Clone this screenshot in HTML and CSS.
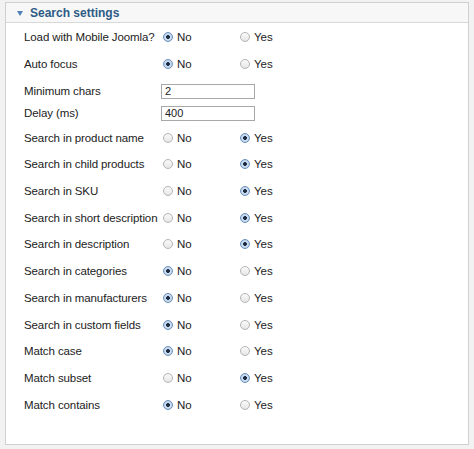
FILE: index.html
```html
<!DOCTYPE html>
<html lang="en">
<head>
  <meta charset="UTF-8">
  <title>Search settings</title>
  <link rel="stylesheet" href="styles.css">
</head>
<body>
  <div class="panel">
    <div class="panel-head">
      <span class="arrow"></span>
      <span class="panel-title">Search settings</span>
    </div>
    <div class="panel-body">
      <div class="row">
        <label class="name">Load with Mobile Joomla?</label>
        <label class="opt"><input type="radio" name="mj" checked> No</label>
        <label class="opt"><input type="radio" name="mj"> Yes</label>
      </div>
      <div class="row">
        <label class="name">Auto focus</label>
        <label class="opt"><input type="radio" name="af" checked> No</label>
        <label class="opt"><input type="radio" name="af"> Yes</label>
      </div>
      <div class="row row-text first-text">
        <label class="name">Minimum chars</label>
        <input type="text" class="field" value="2">
      </div>
      <div class="row row-text">
        <label class="name">Delay (ms)</label>
        <input type="text" class="field" value="400">
      </div>
      <div class="row">
        <label class="name">Search in product name</label>
        <label class="opt"><input type="radio" name="pn"> No</label>
        <label class="opt"><input type="radio" name="pn" checked> Yes</label>
      </div>
      <div class="row">
        <label class="name">Search in child products</label>
        <label class="opt"><input type="radio" name="cp"> No</label>
        <label class="opt"><input type="radio" name="cp" checked> Yes</label>
      </div>
      <div class="row">
        <label class="name">Search in SKU</label>
        <label class="opt"><input type="radio" name="sku"> No</label>
        <label class="opt"><input type="radio" name="sku" checked> Yes</label>
      </div>
      <div class="row">
        <label class="name">Search in short description</label>
        <label class="opt"><input type="radio" name="sd"> No</label>
        <label class="opt"><input type="radio" name="sd" checked> Yes</label>
      </div>
      <div class="row">
        <label class="name">Search in description</label>
        <label class="opt"><input type="radio" name="ds"> No</label>
        <label class="opt"><input type="radio" name="ds" checked> Yes</label>
      </div>
      <div class="row">
        <label class="name">Search in categories</label>
        <label class="opt"><input type="radio" name="cat" checked> No</label>
        <label class="opt"><input type="radio" name="cat"> Yes</label>
      </div>
      <div class="row">
        <label class="name">Search in manufacturers</label>
        <label class="opt"><input type="radio" name="man" checked> No</label>
        <label class="opt"><input type="radio" name="man"> Yes</label>
      </div>
      <div class="row">
        <label class="name">Search in custom fields</label>
        <label class="opt"><input type="radio" name="cf" checked> No</label>
        <label class="opt"><input type="radio" name="cf"> Yes</label>
      </div>
      <div class="row">
        <label class="name">Match case</label>
        <label class="opt"><input type="radio" name="mc" checked> No</label>
        <label class="opt"><input type="radio" name="mc"> Yes</label>
      </div>
      <div class="row">
        <label class="name">Match subset</label>
        <label class="opt"><input type="radio" name="ms"> No</label>
        <label class="opt"><input type="radio" name="ms" checked> Yes</label>
      </div>
      <div class="row">
        <label class="name">Match contains</label>
        <label class="opt"><input type="radio" name="mco" checked> No</label>
        <label class="opt"><input type="radio" name="mco"> Yes</label>
      </div>
    </div>
  </div>
</body>
</html>
```

FILE: styles.css
```css
* {
  box-sizing: border-box;
}

body {
  margin: 0;
  padding: 2px 5px 4px 5px;
  background: #f2f2f2;
  font-family: "Liberation Sans", Arial, sans-serif;
  font-size: 11.5px;
  color: #222;
}

.panel {
  border: 1px solid #d0d0d0;
  background: #fff;
  height: 443px;
}

.panel-head {
  display: flex;
  align-items: center;
  height: 20px;
  padding-left: 11px;
  background: #f7f7f7;
  border-bottom: 1px solid #d8d8d8;
}

.arrow {
  width: 0;
  height: 0;
  border-left: 3.5px solid transparent;
  border-right: 3.5px solid transparent;
  border-top: 5px solid #4f7fb3;
  margin-right: 7px;
  margin-top: 2px;
}

.panel-title {
  font-weight: bold;
  font-size: 12px;
  color: #2d5b86;
}

.panel-body {
  padding: 1px 0 0 18px;
}

.row {
  display: flex;
  align-items: center;
  height: 26.7px;
  white-space: nowrap;
}

.row-text {
  height: 22px;
}

.first-text {
  margin-top: 3px;
}

.name {
  width: 139px;
  letter-spacing: -0.1px;
}

.opt {
  display: flex;
  align-items: center;
  width: 77px;
}

.opt input {
  appearance: none;
  width: 10px;
  height: 10px;
  margin: 0 4px 0 0;
  border: 1px solid #b4b4b4;
  border-radius: 50%;
  background: linear-gradient(#fafafa, #e6e6e6);
}

.opt input:checked {
  border-color: #6d8fb8;
  background: radial-gradient(circle, #1e2c44 0 1.6px, #cfe0f3 2.2px, #a9c4e4 100%);
}

.field {
  width: 94px;
  height: 15px;
  margin-left: -2px;
  padding: 0 3px;
  border: 1px solid #a8a8a8;
  font-family: "Liberation Sans", Arial, sans-serif;
  font-size: 11px;
  color: #222;
}
```
